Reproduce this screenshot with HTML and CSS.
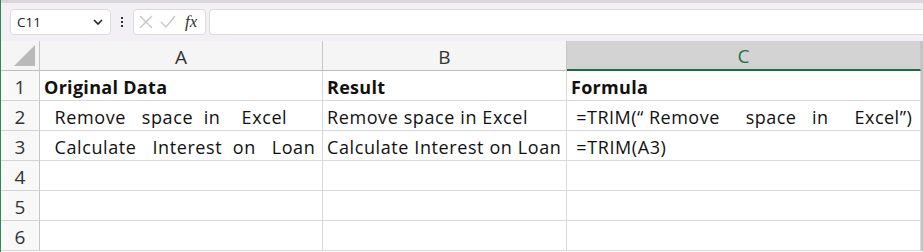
FILE: index.html
```html
<!DOCTYPE html>
<html>
<head>
<meta charset="utf-8">
<link rel="stylesheet" href="styles.css">
</head>
<body>
<div class="app">
  <div class="toolbar">
    <div class="namebox">
      <span class="ref">C11</span>
      <svg class="chev" width="10" height="6" viewBox="0 0 10 6"><path d="M1 1 L5 5 L9 1" fill="none" stroke="#222" stroke-width="1.6"/></svg>
    </div>
    <div class="dots"><i></i><i></i><i></i></div>
    <div class="fxbox">
      <svg width="14" height="14" viewBox="0 0 14 14"><path d="M1 1 L13 13 M13 1 L1 13" stroke="#c4c4c4" stroke-width="1.2" fill="none"/></svg>
      <svg width="16" height="14" viewBox="0 0 16 14"><path d="M1 7 L6 12 L15 1" stroke="#c4c4c4" stroke-width="1.2" fill="none"/></svg>
      <span class="fx">fx</span>
    </div>
    <div class="formula"></div>
  </div>
  <div class="sheet">
    <div class="corner"><svg width="22" height="22" viewBox="0 0 22 22"><polygon points="0,21 21,21 21,0" fill="#b9b9b9"/></svg></div>
    <div class="colh">A</div>
    <div class="colh">B</div>
    <div class="colh sel">C</div>
    <div class="edge"></div>

    <div class="rowh">1</div>
    <div class="cell bold">Original Data</div>
    <div class="cell bold">Result</div>
    <div class="cell bold">Formula</div>
    <div class="edge"></div>

    <div class="rowh">2</div>
    <div class="cell">  Remove   space  in    Excel</div>
    <div class="cell">Remove space in Excel</div>
    <div class="cell tight"> =TRIM(“ Remove     space   in     Excel”)</div>
    <div class="edge"></div>

    <div class="rowh">3</div>
    <div class="cell">  Calculate   Interest  on   Loan</div>
    <div class="cell">Calculate Interest on Loan</div>
    <div class="cell"> =TRIM(A3)</div>
    <div class="edge"></div>

    <div class="rowh">4</div>
    <div class="cell"></div>
    <div class="cell"></div>
    <div class="cell"></div>
    <div class="edge"></div>

    <div class="rowh">5</div>
    <div class="cell"></div>
    <div class="cell"></div>
    <div class="cell"></div>
    <div class="edge"></div>

    <div class="rowh">6</div>
    <div class="cell"></div>
    <div class="cell"></div>
    <div class="cell"></div>
    <div class="edge"></div>
  </div>
</div>
</body>
</html>
```

FILE: styles.css
```css
* { box-sizing: border-box; }
html, body { margin: 0; padding: 0; background: #fff; }
body { width: 923px; height: 252px; overflow: hidden; font-family: "Open Sans", Lato, sans-serif; }

.app {
  border-left: 1px solid #3f7f55;
  height: 252px;
}

.toolbar {
  height: 41px;
  background: #f2f0f4;
  border-top: 3px solid #d8d5db;
  display: flex;
  align-items: flex-start;
  padding: 6px 0 0 9px;
}

.namebox {
  width: 101px;
  height: 26px;
  background: #fff;
  border: 1px solid #dcdcdc;
  border-radius: 4px;
  display: flex;
  align-items: center;
  justify-content: space-between;
  padding: 0 7px 0 6px;
  font-size: 13.5px;
  color: #222;
}

.dots {
  width: 22px;
  height: 26px;
  display: flex;
  flex-direction: column;
  align-items: center;
  justify-content: center;
  gap: 2px;
}
.dots i {
  display: block;
  width: 2px;
  height: 2px;
  background: #333;
}

.fxbox {
  width: 73px;
  height: 26px;
  background: #fff;
  border: 1px solid #dcdcdc;
  border-radius: 4px;
  display: flex;
  align-items: center;
  gap: 7px;
  padding: 0 0 0 5px;
}
.fx {
  font-family: "Liberation Serif", serif;
  font-style: italic;
  font-size: 17px;
  color: #333;
  margin-left: 2px;
}

.formula {
  flex: 1;
  height: 26px;
  margin-left: 3px;
  background: #fff;
  border: 1px solid #dcdcdc;
  border-right: none;
  border-radius: 4px 0 0 4px;
}

.sheet {
  display: grid;
  grid-template-columns: 39px 283px 244px 354px 1fr;
  grid-auto-rows: 30px;
}

.corner {
  background: #f5f5f5;
  border-right: 1px solid #c6c6c6;
  border-bottom: 1px solid #bdbdbd;
  display: flex;
  align-items: flex-end;
  justify-content: flex-end;
  padding: 0 3px 3px 0;
}

.colh {
  background: #f5f5f5;
  border-right: 1px solid #c6c6c6;
  border-bottom: 1px solid #bdbdbd;
  display: flex;
  align-items: center;
  justify-content: center;
  font-size: 19px;
  color: #333;
  padding-top: 2px;
}
.colh.sel {
  background: #d3d3d3;
  color: #217346;
  border-bottom: 2px solid #1f6b43;
  border-right: 1px solid #c6c6c6;
}

.edge {
  background: #c3c3c3;
}

.rowh {
  background: #f8f8f8;
  border-right: 1px solid #c6c6c6;
  border-bottom: 1px solid #d4d4d4;
  display: flex;
  align-items: center;
  justify-content: center;
  font-size: 19px;
  color: #333;
  padding-top: 2px;
}

.cell {
  border-right: 1px solid #d9d9d9;
  border-bottom: 1px solid #d9d9d9;
  display: flex;
  align-items: center;
  padding: 2px 0 0 4px;
  font-size: 18px;
  letter-spacing: 0.6px;
  color: #111;
  white-space: pre;
  overflow: hidden;
}
.cell.tight { letter-spacing: 0.5px; }
.cell.bold { font-weight: bold; letter-spacing: 0.3px; }
```
